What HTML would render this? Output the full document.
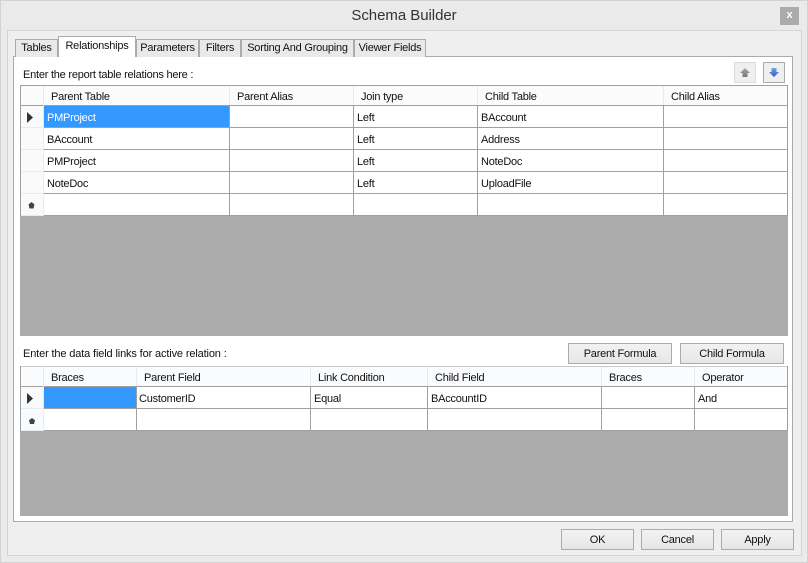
<!DOCTYPE html>
<html><head><meta charset="utf-8"><style>
html,body{margin:0;padding:0}
body{width:808px;height:563px;overflow:hidden;position:relative;background:#eaeaea;font-family:"Liberation Sans",sans-serif;font-size:11px;letter-spacing:-0.23px;color:#111}
div{position:absolute;box-sizing:border-box;white-space:nowrap}
.t{line-height:14px;height:14px;margin-top:1px}
.tab{background:#e9e9e9;border:1px solid #ababab;border-bottom:0;text-align:center;line-height:16px}
.btn{background:linear-gradient(#f2f2f2,#e6e6e6);border:1px solid #ababab;text-align:center;line-height:20px;height:21px}
.v{width:1px;background:#a0a0a0}
.h{height:1px;background:#a0a0a0}
.hd{background:#fafbfd}
.sep{width:1px;background:#e3ebf5}
.rs{left:21px;width:22px;height:1px;background:#e3ebf5}
.rh{background:#f9fafc}
.g{background:#ababab}
</style></head><body>
<div style="left:0;top:0;width:808px;height:563px;border:1px solid #d2d2d2"></div>
<div class="t" style="left:0;width:808px;top:6px;height:18px;line-height:18px;text-align:center;font-size:15px;letter-spacing:-0.05px;color:#333">Schema Builder</div>
<div style="left:780px;top:7px;width:19px;height:18px;background:#ababab;color:#fff;font-weight:bold;font-size:11px;line-height:16px;text-align:center">x</div>
<div style="left:7px;top:30px;width:795px;height:526px;border:1px solid #d4d4d4;background:#efefef"></div>
<div style="left:13px;top:56px;width:780px;height:466px;border:1px solid #ababab;background:#fff"></div>
<div class="tab" style="left:15px;top:39px;width:43px;height:18px">Tables</div>
<div class="tab" style="left:136px;top:39px;width:63px;height:18px">Parameters</div>
<div class="tab" style="left:199px;top:39px;width:42px;height:18px">Filters</div>
<div class="tab" style="left:241px;top:39px;width:113px;height:18px">Sorting And Grouping</div>
<div class="tab" style="left:354px;top:39px;width:72px;height:18px">Viewer Fields</div>
<div class="tab" style="left:58px;top:36px;width:78px;height:21px;background:#fff;line-height:18px">Relationships</div>
<div class="t" style="left:23px;top:67px">Enter the report table relations here :</div>
<svg width="0" height="0" style="position:absolute"><defs>
<linearGradient id="gu" x1="0" y1="0" x2="0" y2="1"><stop offset="0" stop-color="#a8a8a8"/><stop offset="1" stop-color="#777"/></linearGradient>
<linearGradient id="gd" x1="0" y1="0" x2="0" y2="1"><stop offset="0" stop-color="#7aa6ec"/><stop offset="1" stop-color="#2458c4"/></linearGradient>
</defs></svg>
<div style="left:734px;top:62px;width:22px;height:21px;border:1px solid #dcdcdc;background:#efefef"><svg width="20" height="19" style="display:block"><path d="M10 5L15 10H12.500V14H7.500V10H5Z" fill="url(#gu)"/></svg></div>
<div style="left:763px;top:62px;width:22px;height:21px;border:1px solid #ababab;background:#efefef"><svg width="20" height="19" style="display:block"><path d="M7.500 5H12.500V9H15L10 14L5 9H7.500Z" fill="url(#gd)"/></svg></div>

<!-- grid 1 -->
<div class="hd" style="left:20px;top:85px;width:768px;height:20px"></div>
<div class="rh" style="left:21px;top:105px;width:22px;height:111px"></div>
<div style="left:44px;top:106px;width:185px;height:21px;background:#3399ff"></div>
<div class="g" style="left:20px;top:216px;width:768px;height:120px"></div>
<div class="h" style="left:20px;top:85px;width:768px"></div>
<div class="h" style="left:20px;top:105px;width:768px"></div>
<div class="h" style="left:44px;top:127px;width:744px"></div>
<div class="h" style="left:44px;top:149px;width:744px"></div>
<div class="h" style="left:44px;top:171px;width:744px"></div>
<div class="h" style="left:44px;top:193px;width:744px"></div>
<div class="h" style="left:44px;top:215px;width:744px"></div>
<div class="rs" style="top:127px"></div>
<div class="rs" style="top:149px"></div>
<div class="rs" style="top:171px"></div>
<div class="rs" style="top:193px"></div>
<div class="rs" style="top:215px"></div>
<div class="v" style="left:20px;top:85px;height:131px"></div>
<div class="sep" style="left:43px;top:86px;height:130px"></div>
<div class="sep" style="left:229px;top:86px;height:19px"></div>
<div class="sep" style="left:353px;top:86px;height:19px"></div>
<div class="sep" style="left:477px;top:86px;height:19px"></div>
<div class="sep" style="left:663px;top:86px;height:19px"></div>
<div class="v" style="left:229px;top:105px;height:111px"></div>
<div class="v" style="left:353px;top:105px;height:111px"></div>
<div class="v" style="left:477px;top:105px;height:111px"></div>
<div class="v" style="left:663px;top:105px;height:111px"></div>
<div class="v" style="left:787px;top:85px;height:131px"></div>
<div class="t" style="left:51px;top:89px">Parent Table</div>
<div class="t" style="left:237px;top:89px">Parent Alias</div>
<div class="t" style="left:361px;top:89px">Join type</div>
<div class="t" style="left:485px;top:89px">Child Table</div>
<div class="t" style="left:671px;top:89px">Child Alias</div>
<svg style="position:absolute;left:26px;top:112px" width="8" height="11"><path d="M1 0L7 5.500L1 11Z" fill="#333"/></svg>
<div class="t" style="left:47px;top:110px;color:#fff">PMProject</div>
<div class="t" style="left:357px;top:110px">Left</div>
<div class="t" style="left:481px;top:110px">BAccount</div>
<div class="t" style="left:47px;top:132px">BAccount</div>
<div class="t" style="left:357px;top:132px">Left</div>
<div class="t" style="left:481px;top:132px">Address</div>
<div class="t" style="left:47px;top:154px">PMProject</div>
<div class="t" style="left:357px;top:154px">Left</div>
<div class="t" style="left:481px;top:154px">NoteDoc</div>
<div class="t" style="left:47px;top:176px">NoteDoc</div>
<div class="t" style="left:357px;top:176px">Left</div>
<div class="t" style="left:481px;top:176px">UploadFile</div>
<svg style="position:absolute;left:28px;top:202px" width="7" height="7"><path d="M3.500 0L6.500 2.500L5.500 6.500H1.500L0.500 2.500Z" fill="#444"/></svg>

<!-- second section -->
<div class="t" style="left:23px;top:346px;letter-spacing:-0.14px">Enter the data field links for active relation :</div>
<div class="btn" style="left:568px;top:343px;width:104px">Parent Formula</div>
<div class="btn" style="left:680px;top:343px;width:104px">Child Formula</div>

<div class="hd" style="left:20px;top:366px;width:768px;height:20px"></div>
<div class="rh" style="left:21px;top:386px;width:22px;height:45px"></div>
<div style="left:44px;top:387px;width:92px;height:21px;background:#3399ff"></div>
<div class="g" style="left:20px;top:431px;width:768px;height:85px"></div>
<div class="h" style="left:20px;top:366px;width:768px;background:#c8c8c8"></div>
<div class="h" style="left:20px;top:386px;width:768px"></div>
<div class="h" style="left:44px;top:408px;width:744px"></div>
<div class="h" style="left:44px;top:430px;width:744px"></div>
<div class="rs" style="top:408px"></div>
<div class="rs" style="top:430px"></div>
<div class="v" style="left:20px;top:366px;height:65px"></div>
<div class="sep" style="left:43px;top:367px;height:64px"></div>
<div class="sep" style="left:136px;top:367px;height:19px"></div>
<div class="sep" style="left:310px;top:367px;height:19px"></div>
<div class="sep" style="left:427px;top:367px;height:19px"></div>
<div class="sep" style="left:601px;top:367px;height:19px"></div>
<div class="sep" style="left:694px;top:367px;height:19px"></div>
<div class="v" style="left:136px;top:386px;height:45px"></div>
<div class="v" style="left:310px;top:386px;height:45px"></div>
<div class="v" style="left:427px;top:386px;height:45px"></div>
<div class="v" style="left:601px;top:386px;height:45px"></div>
<div class="v" style="left:694px;top:386px;height:45px"></div>
<div class="v" style="left:787px;top:366px;height:65px"></div>
<div class="t" style="left:51px;top:370px">Braces</div>
<div class="t" style="left:144px;top:370px">Parent Field</div>
<div class="t" style="left:318px;top:370px">Link Condition</div>
<div class="t" style="left:435px;top:370px">Child Field</div>
<div class="t" style="left:609px;top:370px">Braces</div>
<div class="t" style="left:702px;top:370px">Operator</div>
<svg style="position:absolute;left:26px;top:393px" width="8" height="11"><path d="M1 0L7 5.500L1 11Z" fill="#333"/></svg>
<div class="t" style="left:139px;top:391px">CustomerID</div>
<div class="t" style="left:314px;top:391px">Equal</div>
<div class="t" style="left:431px;top:391px">BAccountID</div>
<div class="t" style="left:698px;top:391px">And</div>
<svg style="position:absolute;left:29px;top:418px" width="6" height="6"><path d="M3 0L6 2.200L5 6H1L0 2.200Z" fill="#444"/></svg>

<div class="btn" style="left:561px;top:529px;width:73px">OK</div>
<div class="btn" style="left:641px;top:529px;width:73px">Cancel</div>
<div class="btn" style="left:721px;top:529px;width:73px">Apply</div>
</body></html>
